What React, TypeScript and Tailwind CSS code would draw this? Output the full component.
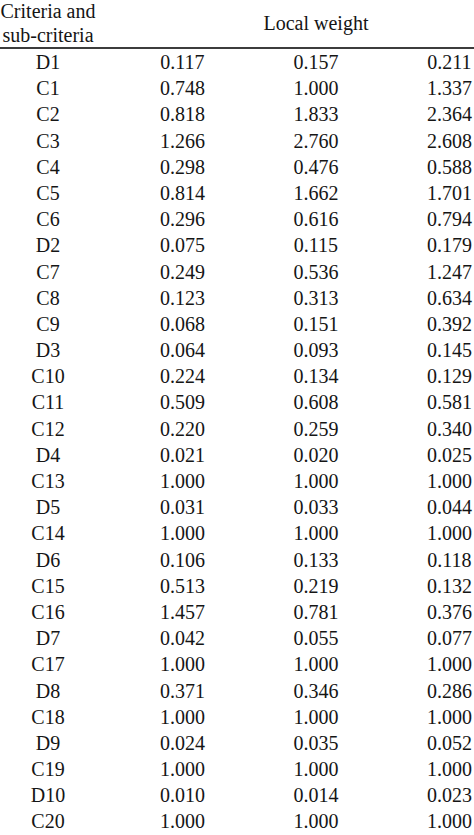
import React from "react";

const rows: [string, string, string, string][] = [
  ["D1", "0.117", "0.157", "0.211"],
  ["C1", "0.748", "1.000", "1.337"],
  ["C2", "0.818", "1.833", "2.364"],
  ["C3", "1.266", "2.760", "2.608"],
  ["C4", "0.298", "0.476", "0.588"],
  ["C5", "0.814", "1.662", "1.701"],
  ["C6", "0.296", "0.616", "0.794"],
  ["D2", "0.075", "0.115", "0.179"],
  ["C7", "0.249", "0.536", "1.247"],
  ["C8", "0.123", "0.313", "0.634"],
  ["C9", "0.068", "0.151", "0.392"],
  ["D3", "0.064", "0.093", "0.145"],
  ["C10", "0.224", "0.134", "0.129"],
  ["C11", "0.509", "0.608", "0.581"],
  ["C12", "0.220", "0.259", "0.340"],
  ["D4", "0.021", "0.020", "0.025"],
  ["C13", "1.000", "1.000", "1.000"],
  ["D5", "0.031", "0.033", "0.044"],
  ["C14", "1.000", "1.000", "1.000"],
  ["D6", "0.106", "0.133", "0.118"],
  ["C15", "0.513", "0.219", "0.132"],
  ["C16", "1.457", "0.781", "0.376"],
  ["D7", "0.042", "0.055", "0.077"],
  ["C17", "1.000", "1.000", "1.000"],
  ["D8", "0.371", "0.346", "0.286"],
  ["C18", "1.000", "1.000", "1.000"],
  ["D9", "0.024", "0.035", "0.052"],
  ["C19", "1.000", "1.000", "1.000"],
  ["D10", "0.010", "0.014", "0.023"],
  ["C20", "1.000", "1.000", "1.000"],
];

export default function App() {
  return (
    <div className="w-[474px] h-[835px] overflow-hidden bg-white text-[#151515] font-serif text-[20px]">
      <div className="w-[540px] font-['Liberation_Serif']">
        <div className="flex border-b-2 border-[#3c3c3c]">
          <div className="w-[96px] shrink-0 text-center leading-[23.5px]">
            Criteria and
            <br />
            sub-criteria
          </div>
          <div className="ml-[19.75px] w-[400.5px] shrink-0 flex items-center justify-center leading-[23.5px]">
            Local weight
          </div>
        </div>
        {rows.map((r) => (
          <div key={r[0]} className="flex h-[26.2px] leading-[26.2px]">
            <div className="w-[96px] shrink-0 text-center">{r[0]}</div>
            <div className="ml-[19.75px] w-[133.5px] shrink-0 text-center">{r[1]}</div>
            <div className="w-[133.5px] shrink-0 text-center">{r[2]}</div>
            <div className="w-[133.5px] shrink-0 text-center">{r[3]}</div>
          </div>
        ))}
      </div>
    </div>
  );
}
